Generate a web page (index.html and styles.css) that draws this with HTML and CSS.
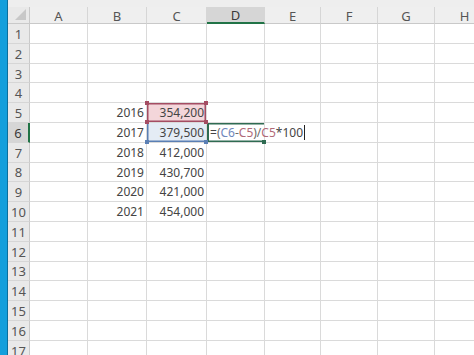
FILE: index.html
```html
<!DOCTYPE html>
<html lang="ja">
<head>
    <meta charset="UTF-8">
    <title>Sheet</title>
    <link rel="stylesheet" href="styles.css">
</head>
<body>

<div class="app">
    <div class="side"></div>
    <div class="main">
        <div class="strip"></div>
        <div class="sheet">
            <div class="corner"><span class="tri"></span></div>
            <div class="ch">A</div>
            <div class="ch">B</div>
            <div class="ch">C</div>
            <div class="ch active">D</div>
            <div class="ch">E</div>
            <div class="ch">F</div>
            <div class="ch">G</div>
            <div class="ch">H</div>

            <div class="rh">1</div><div class="c"></div><div class="c"></div><div class="c"></div><div class="c"></div><div class="c"></div><div class="c"></div><div class="c"></div><div class="c"></div>
            <div class="rh">2</div><div class="c"></div><div class="c"></div><div class="c"></div><div class="c"></div><div class="c"></div><div class="c"></div><div class="c"></div><div class="c"></div>
            <div class="rh">3</div><div class="c"></div><div class="c"></div><div class="c"></div><div class="c"></div><div class="c"></div><div class="c"></div><div class="c"></div><div class="c"></div>
            <div class="rh">4</div><div class="c"></div><div class="c"></div><div class="c"></div><div class="c"></div><div class="c"></div><div class="c"></div><div class="c"></div><div class="c"></div>

            <div class="rh">5</div><div class="c"></div><div class="c num">2016</div>
            <div class="c num ref-red">354,200<span class="h tl"></span><span class="h tr"></span><span class="h bl"></span><span class="h br"></span></div>
            <div class="c"></div><div class="c"></div><div class="c"></div><div class="c"></div><div class="c"></div>

            <div class="rh active">6</div><div class="c"></div><div class="c num">2017</div>
            <div class="c num ref-blue">379,500<span class="h bl"></span><span class="h br"></span></div>
            <div class="c edit"><span class="formula">=<i class="g">(</i><i class="b">C6</i><i class="g">-</i><i class="r">C5</i><i class="g">)/</i><i class="r">C5</i>*100<span class="caret"></span></span><span class="h br"></span></div>
            <div class="c"></div><div class="c"></div><div class="c"></div><div class="c"></div>

            <div class="rh">7</div><div class="c"></div><div class="c num">2018</div><div class="c num">412,000</div><div class="c"></div><div class="c"></div><div class="c"></div><div class="c"></div><div class="c"></div>
            <div class="rh">8</div><div class="c"></div><div class="c num">2019</div><div class="c num">430,700</div><div class="c"></div><div class="c"></div><div class="c"></div><div class="c"></div><div class="c"></div>
            <div class="rh">9</div><div class="c"></div><div class="c num">2020</div><div class="c num">421,000</div><div class="c"></div><div class="c"></div><div class="c"></div><div class="c"></div><div class="c"></div>
            <div class="rh">10</div><div class="c"></div><div class="c num">2021</div><div class="c num">454,000</div><div class="c"></div><div class="c"></div><div class="c"></div><div class="c"></div><div class="c"></div>

            <div class="rh">11</div><div class="c"></div><div class="c"></div><div class="c"></div><div class="c"></div><div class="c"></div><div class="c"></div><div class="c"></div><div class="c"></div>
            <div class="rh">12</div><div class="c"></div><div class="c"></div><div class="c"></div><div class="c"></div><div class="c"></div><div class="c"></div><div class="c"></div><div class="c"></div>
            <div class="rh">13</div><div class="c"></div><div class="c"></div><div class="c"></div><div class="c"></div><div class="c"></div><div class="c"></div><div class="c"></div><div class="c"></div>
            <div class="rh">14</div><div class="c"></div><div class="c"></div><div class="c"></div><div class="c"></div><div class="c"></div><div class="c"></div><div class="c"></div><div class="c"></div>
            <div class="rh">15</div><div class="c"></div><div class="c"></div><div class="c"></div><div class="c"></div><div class="c"></div><div class="c"></div><div class="c"></div><div class="c"></div>
            <div class="rh">16</div><div class="c"></div><div class="c"></div><div class="c"></div><div class="c"></div><div class="c"></div><div class="c"></div><div class="c"></div><div class="c"></div>
            <div class="rh">17</div><div class="c"></div><div class="c"></div><div class="c"></div><div class="c"></div><div class="c"></div><div class="c"></div><div class="c"></div><div class="c"></div>
        </div>
    </div>
</div>

</body>
</html>
```

FILE: styles.css
```css
* {
    margin: 0;
    padding: 0;
    box-sizing: border-box;
}

html, body {
    height: 100%;
    overflow: hidden;
    background: #fff;
}

body {
    font-family: "Noto Sans", "Noto Sans CJK JP", sans-serif;
    font-size: 12px;
    color: #444;
}

.app {
    display: flex;
    height: 100%;
}

.side {
    width: 8px;
    flex: none;
    background: #139fdc;
    border-right: 1px solid #0b6f9c;
}

.main {
    flex: 1;
    display: flex;
    flex-direction: column;
    min-width: 0;
}

.strip {
    height: 7px;
    flex: none;
    background: #eeeeee;
}

.sheet {
    display: grid;
    grid-template-columns: 22px 58px 59px 60px 58px 56px 57px 57px 60px;
    grid-template-rows: 17px;
    grid-auto-rows: 19.8px;
}

.corner {
    position: relative;
    background: #e9e9e9;
    border-right: 1px solid #c9c9c9;
    border-bottom: 1px solid #c9c9c9;
}

.corner .tri {
    position: absolute;
    right: 3px;
    bottom: 3px;
    width: 0;
    height: 0;
    border-left: 11px solid transparent;
    border-bottom: 11px solid #c8c8c8;
}

.ch {
    display: flex;
    align-items: center;
    justify-content: center;
    padding-top: 1px;
    background: #efefef;
    border-right: 1px solid #d6d6d6;
    border-bottom: 1px solid #c9c9c9;
    color: #555;
    font-size: 13px;
}

.ch.active {
    background: #d6d6d6;
    border-bottom: 2px solid #217346;
    color: #3a3a3a;
}

.rh {
    display: flex;
    align-items: center;
    justify-content: center;
    padding-top: 1px;
    background: #e9e9e9;
    border-right: 1px solid #c9c9c9;
    border-bottom: 1px solid #d6d6d6;
    color: #555;
    font-size: 13px;
}

.rh.active {
    background: #d6d6d6;
    border-right: 2px solid #217346;
    color: #3a3a3a;
}

.c {
    position: relative;
    border-right: 1px solid #dadada;
    border-bottom: 1px solid #dadada;
    white-space: nowrap;
    line-height: 20px;
}

.num {
    text-align: right;
    padding-right: 2px;
}

.ref-red {
    background: #f3d6da;
    box-shadow: inset 0 0 0 1.5px #a44d63;
}

.ref-blue {
    background: #e4ecf5;
    box-shadow: inset 1.5px 0 0 #5a7fb4, inset 0 -1.5px 0 #5a7fb4;
}

.edit {
    overflow: visible;
    z-index: 2;
    box-shadow: inset 2px 0 0 #2f6b52, inset 0 1.5px 0 #2f6b52, inset 0 -1.5px 0 #2f6b52;
}

.formula {
    position: absolute;
    left: 3px;
    top: 0;
    color: #444;
}

.formula i {
    font-style: normal;
}

.formula .g {
    color: #6a6a6a;
}

.formula .b {
    color: #6f88bd;
}

.formula .r {
    color: #b06a78;
}

.caret {
    display: inline-block;
    width: 1px;
    height: 15px;
    margin-left: 1px;
    vertical-align: -3px;
    background: #222;
}

.h {
    position: absolute;
    width: 4px;
    height: 4px;
    z-index: 3;
}

.ref-red .h {
    background: #a44d63;
}

.ref-blue .h {
    background: #5a7fb4;
}

.edit .h {
    background: #2f6b52;
}

.h.tl { left: -2px; top: -2px; }
.h.tr { right: -2px; top: -2px; }
.h.bl { left: -2px; bottom: -2px; }
.h.br { right: -2px; bottom: -2px; }
```
